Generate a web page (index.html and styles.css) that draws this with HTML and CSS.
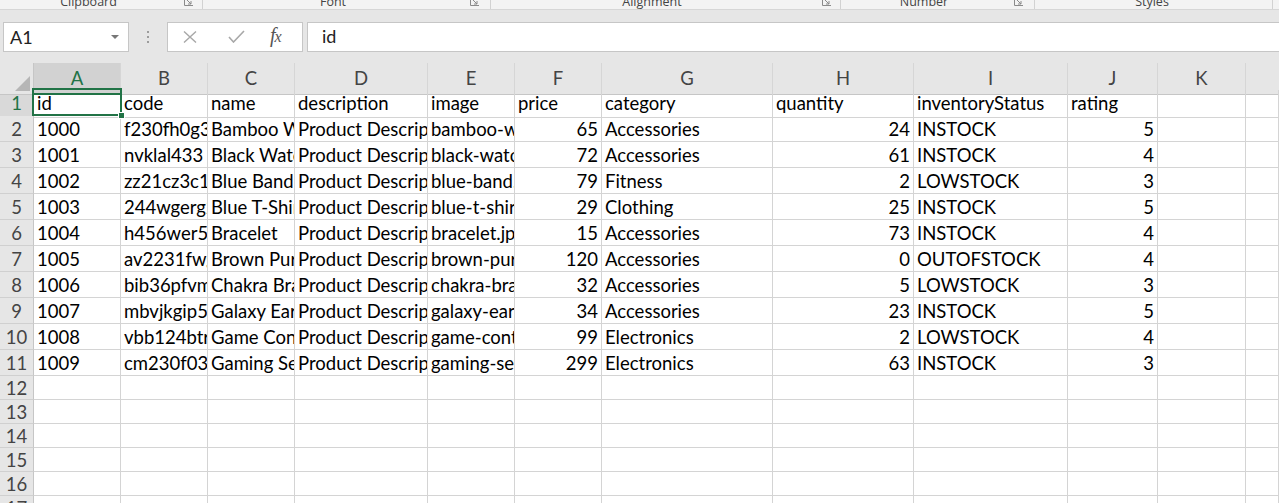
FILE: index.html
```html
<!DOCTYPE html>
<html>
<head>
<meta charset="utf-8">
<link rel="stylesheet" href="styles.css">
</head>
<body>
<div class="ribbon">
  <div class="group g1"><span class="glabel">Clipboard</span><span class="launch"><svg width="10" height="10" viewBox="0 0 10 10"><path d="M0.5 0 V8.5 H9" fill="none" stroke="#8a8a8a"/><path d="M3 3 L7 7 M7 4 V7 H4" fill="none" stroke="#8a8a8a"/></svg></span></div>
  <div class="group g2"><span class="glabel">Font</span><span class="launch"><svg width="10" height="10" viewBox="0 0 10 10"><path d="M0.5 0 V8.5 H9" fill="none" stroke="#8a8a8a"/><path d="M3 3 L7 7 M7 4 V7 H4" fill="none" stroke="#8a8a8a"/></svg></span></div>
  <div class="group g3"><span class="glabel">Alignment</span><span class="launch"><svg width="10" height="10" viewBox="0 0 10 10"><path d="M0.5 0 V8.5 H9" fill="none" stroke="#8a8a8a"/><path d="M3 3 L7 7 M7 4 V7 H4" fill="none" stroke="#8a8a8a"/></svg></span></div>
  <div class="group g4"><span class="glabel">Number</span><span class="launch"><svg width="10" height="10" viewBox="0 0 10 10"><path d="M0.5 0 V8.5 H9" fill="none" stroke="#8a8a8a"/><path d="M3 3 L7 7 M7 4 V7 H4" fill="none" stroke="#8a8a8a"/></svg></span></div>
  <div class="group g5"><span class="glabel">Styles</span></div>
</div>

<div class="fbar">
  <div class="namebox"><span class="nbtext">A1</span><span class="caret"></span></div>
  <div class="grip"><span></span><span></span><span></span></div>
  <div class="fbtns">
    <svg class="ico-x" width="14" height="12" viewBox="0 0 14 12"><path d="M1 0.5 L13 11.5 M13 0.5 L1 11.5" stroke="#a8a8a8" stroke-width="1.4" fill="none"/></svg>
    <svg class="ico-ok" width="17" height="13" viewBox="0 0 17 13"><path d="M1 7 L5.5 12 L16 1" stroke="#a8a8a8" stroke-width="1.6" fill="none"/></svg>
    <span class="fx"><i>f</i><i class="x">x</i></span>
  </div>
  <div class="finput">id</div>
</div>

<div class="sheet">
  <div class="row hdr">
    <div class="corner"><span class="tri"></span></div>
    <div class="ch sel">A</div><div class="ch">B</div><div class="ch">C</div><div class="ch">D</div><div class="ch">E</div><div class="ch">F</div><div class="ch">G</div><div class="ch">H</div><div class="ch">I</div><div class="ch">J</div><div class="ch">K</div><div class="ch last"></div>
  </div>
  <div class="row">
    <div class="rh sel">1</div>
    <div class="c active">id<span class="selbox"><span class="handle"></span></span></div><div class="c">code</div><div class="c">name</div><div class="c">description</div><div class="c">image</div><div class="c">price</div><div class="c">category</div><div class="c">quantity</div><div class="c">inventoryStatus</div><div class="c">rating</div><div class="c"></div><div class="c"></div>
  </div>
  <div class="row">
    <div class="rh">2</div>
    <div class="c">1000</div><div class="c">f230fh0g3</div><div class="c">Bamboo Watch</div><div class="c">Product Description</div><div class="c">bamboo-watch.jpg</div><div class="c n">65</div><div class="c">Accessories</div><div class="c n">24</div><div class="c">INSTOCK</div><div class="c n">5</div><div class="c"></div><div class="c"></div>
  </div>
  <div class="row">
    <div class="rh">3</div>
    <div class="c">1001</div><div class="c">nvklal433</div><div class="c">Black Watch</div><div class="c">Product Description</div><div class="c">black-watch.jpg</div><div class="c n">72</div><div class="c">Accessories</div><div class="c n">61</div><div class="c">INSTOCK</div><div class="c n">4</div><div class="c"></div><div class="c"></div>
  </div>
  <div class="row">
    <div class="rh">4</div>
    <div class="c">1002</div><div class="c">zz21cz3c1</div><div class="c">Blue Band</div><div class="c">Product Description</div><div class="c">blue-band.jpg</div><div class="c n">79</div><div class="c">Fitness</div><div class="c n">2</div><div class="c">LOWSTOCK</div><div class="c n">3</div><div class="c"></div><div class="c"></div>
  </div>
  <div class="row">
    <div class="rh">5</div>
    <div class="c">1003</div><div class="c">244wgerg2</div><div class="c">Blue T-Shirt</div><div class="c">Product Description</div><div class="c">blue-t-shirt.jpg</div><div class="c n">29</div><div class="c">Clothing</div><div class="c n">25</div><div class="c">INSTOCK</div><div class="c n">5</div><div class="c"></div><div class="c"></div>
  </div>
  <div class="row">
    <div class="rh">6</div>
    <div class="c">1004</div><div class="c">h456wer53</div><div class="c">Bracelet</div><div class="c">Product Description</div><div class="c">bracelet.jpg</div><div class="c n">15</div><div class="c">Accessories</div><div class="c n">73</div><div class="c">INSTOCK</div><div class="c n">4</div><div class="c"></div><div class="c"></div>
  </div>
  <div class="row">
    <div class="rh">7</div>
    <div class="c">1005</div><div class="c">av2231fwg</div><div class="c">Brown Purse</div><div class="c">Product Description</div><div class="c">brown-purse.jpg</div><div class="c n">120</div><div class="c">Accessories</div><div class="c n">0</div><div class="c">OUTOFSTOCK</div><div class="c n">4</div><div class="c"></div><div class="c"></div>
  </div>
  <div class="row">
    <div class="rh">8</div>
    <div class="c">1006</div><div class="c">bib36pfvm</div><div class="c">Chakra Bracelet</div><div class="c">Product Description</div><div class="c">chakra-bracelet.jpg</div><div class="c n">32</div><div class="c">Accessories</div><div class="c n">5</div><div class="c">LOWSTOCK</div><div class="c n">3</div><div class="c"></div><div class="c"></div>
  </div>
  <div class="row">
    <div class="rh">9</div>
    <div class="c">1007</div><div class="c">mbvjkgip5</div><div class="c">Galaxy Earrings</div><div class="c">Product Description</div><div class="c">galaxy-earrings.jpg</div><div class="c n">34</div><div class="c">Accessories</div><div class="c n">23</div><div class="c">INSTOCK</div><div class="c n">5</div><div class="c"></div><div class="c"></div>
  </div>
  <div class="row">
    <div class="rh">10</div>
    <div class="c">1008</div><div class="c">vbb124btr</div><div class="c">Game Controller</div><div class="c">Product Description</div><div class="c">game-controller.jpg</div><div class="c n">99</div><div class="c">Electronics</div><div class="c n">2</div><div class="c">LOWSTOCK</div><div class="c n">4</div><div class="c"></div><div class="c"></div>
  </div>
  <div class="row">
    <div class="rh">11</div>
    <div class="c">1009</div><div class="c">cm230f032</div><div class="c">Gaming Set</div><div class="c">Product Description</div><div class="c">gaming-set.jpg</div><div class="c n">299</div><div class="c">Electronics</div><div class="c n">63</div><div class="c">INSTOCK</div><div class="c n">3</div><div class="c"></div><div class="c"></div>
  </div>
  <div class="row short">
    <div class="rh">12</div>
    <div class="c"></div><div class="c"></div><div class="c"></div><div class="c"></div><div class="c"></div><div class="c"></div><div class="c"></div><div class="c"></div><div class="c"></div><div class="c"></div><div class="c"></div><div class="c"></div>
  </div>
  <div class="row short">
    <div class="rh">13</div>
    <div class="c"></div><div class="c"></div><div class="c"></div><div class="c"></div><div class="c"></div><div class="c"></div><div class="c"></div><div class="c"></div><div class="c"></div><div class="c"></div><div class="c"></div><div class="c"></div>
  </div>
  <div class="row short">
    <div class="rh">14</div>
    <div class="c"></div><div class="c"></div><div class="c"></div><div class="c"></div><div class="c"></div><div class="c"></div><div class="c"></div><div class="c"></div><div class="c"></div><div class="c"></div><div class="c"></div><div class="c"></div>
  </div>
  <div class="row short">
    <div class="rh">15</div>
    <div class="c"></div><div class="c"></div><div class="c"></div><div class="c"></div><div class="c"></div><div class="c"></div><div class="c"></div><div class="c"></div><div class="c"></div><div class="c"></div><div class="c"></div><div class="c"></div>
  </div>
  <div class="row short">
    <div class="rh">16</div>
    <div class="c"></div><div class="c"></div><div class="c"></div><div class="c"></div><div class="c"></div><div class="c"></div><div class="c"></div><div class="c"></div><div class="c"></div><div class="c"></div><div class="c"></div><div class="c"></div>
  </div>
  <div class="row short">
    <div class="rh">17</div>
    <div class="c"></div><div class="c"></div><div class="c"></div><div class="c"></div><div class="c"></div><div class="c"></div><div class="c"></div><div class="c"></div><div class="c"></div><div class="c"></div><div class="c"></div><div class="c"></div>
  </div>
</div>
</body>
</html>
```
FILE: styles.css
```css
* { box-sizing: border-box; }
html, body { margin: 0; padding: 0; }
body {
  width: 1279px;
  height: 503px;
  overflow: hidden;
  background: #ffffff;
  font-family: Lato, "Liberation Sans", sans-serif;
  color: #000;
}

/* ribbon group labels strip */
.ribbon {
  height: 10px;
  background: #f3f3f3;
  border-bottom: 1px solid #d6d6d6;
  display: flex;
  overflow: hidden;
}
.group {
  display: flex;
  align-items: flex-start;
  border-right: 1px solid #d2d2d2;
  height: 9px;
  overflow: hidden;
}
.glabel {
  font-family: "Open Sans", "Noto Sans", sans-serif;
  font-size: 12.5px;
  line-height: 13px;
  margin-top: -5px;
  color: #444;
  text-align: center;
  white-space: nowrap;
}
.launch { margin-top: -3px; display: flex; }
.g1 { width: 203px; }
.g1 .glabel { width: 177px; }
.g1 .launch { margin-left: 7px; }
.g2 { width: 288px; }
.g2 .glabel { width: 260px; }
.g2 .launch { margin-left: 7px; }
.g3 { width: 350px; }
.g3 .glabel { width: 322px; }
.g3 .launch { margin-left: 9px; }
.g4 { width: 194px; }
.g4 .glabel { width: 166px; }
.g4 .launch { margin-left: 7px; }
.g5 { width: 238px; }
.g5 .glabel { width: 234px; }

/* formula bar */
.fbar {
  height: 53px;
  background: #e6e6e6;
  display: flex;
  align-items: flex-start;
  padding-top: 12px;
}
.namebox {
  margin-left: 3px;
  width: 126px;
  height: 30px;
  background: #fff;
  border: 1px solid #c6c6c6;
  display: flex;
  align-items: center;
  justify-content: space-between;
  padding: 0 9px 0 6px;
}
.nbtext { font-size: 18px; color: #222; }
.caret {
  width: 0; height: 0;
  border-left: 4px solid transparent;
  border-right: 4px solid transparent;
  border-top: 4px solid #777;
}
.grip {
  width: 38px;
  height: 30px;
  display: flex;
  flex-direction: column;
  align-items: center;
  justify-content: center;
  gap: 3px;
}
.grip span { width: 2px; height: 2px; background: #9c9c9c; }
.fbtns {
  width: 136px;
  height: 30px;
  background: #fff;
  border: 1px solid #c6c6c6;
  display: flex;
  align-items: center;
  padding-left: 15px;
}
.ico-x { margin-right: 31px; }
.ico-ok { margin-right: 25px; margin-top: -1px; }
.fx {
  font-family: "Liberation Serif", "DejaVu Serif", serif;
  font-size: 20px;
  color: #555;
  letter-spacing: -1px;
  margin-top: -3px;
}
.fx .x { font-size: 16px; }
.finput {
  margin-left: 4px;
  flex: 1;
  height: 30px;
  background: #fff;
  border: 1px solid #c6c6c6;
  border-right: none;
  font-size: 18px;
  line-height: 27px;
  padding-left: 14px;
  color: #222;
}

/* sheet grid */
.row {
  display: grid;
  grid-template-columns: 34px 87px 87px 87px 133px 87px 87px 171px 141px 154px 90px 88px 1fr;
  height: 26px;
}
.row.short { height: 24px; }
.row.hdr { height: 27px; }

.corner, .ch, .rh {
  background: #e6e6e6;
  color: #444;
  font-size: 18.5px;
}
.corner {
  border-right: 1px solid #c6c6c6;
  border-bottom: 1px solid #c6c6c6;
  position: relative;
}
.tri {
  position: absolute;
  right: 3px;
  bottom: 3px;
  width: 0; height: 0;
  border-left: 15px solid transparent;
  border-bottom: 15px solid #b6b6b6;
}
.ch {
  text-align: center;
  line-height: 30px;
  border-right: 1px solid #d6d6d6;
  border-bottom: 1px solid #c6c6c6;
}
.ch.last { border-right: none; }
.ch.sel {
  background: #d2d2d2;
  color: #217346;
  border-bottom: 2px solid #217346;
}
.rh {
  text-align: center;
  line-height: 27px;
  border-right: 1px solid #c6c6c6;
  border-bottom: 1px solid #d0d0d0;
  overflow: hidden;
}
.short .rh { line-height: 25px; }
.rh.sel {
  background: #d9d9d9;
  color: #217346;
}

.c {
  border-right: 1px solid #d4d4d4;
  border-bottom: 1px solid #d4d4d4;
  font-size: 18.5px;
  line-height: 27px;
  padding: 0 3px;
  white-space: nowrap;
  overflow: hidden;
}
.c.n { text-align: right; }
.c.active { position: relative; overflow: visible; }
.selbox {
  position: absolute;
  left: -2px;
  top: -2px;
  width: 90px;
  height: 28px;
  border: 2px solid #217346;
  z-index: 2;
}
.handle {
  position: absolute;
  right: -5px;
  bottom: -5px;
  width: 7px;
  height: 7px;
  background: #217346;
  border: 1px solid #fff;
}
```
